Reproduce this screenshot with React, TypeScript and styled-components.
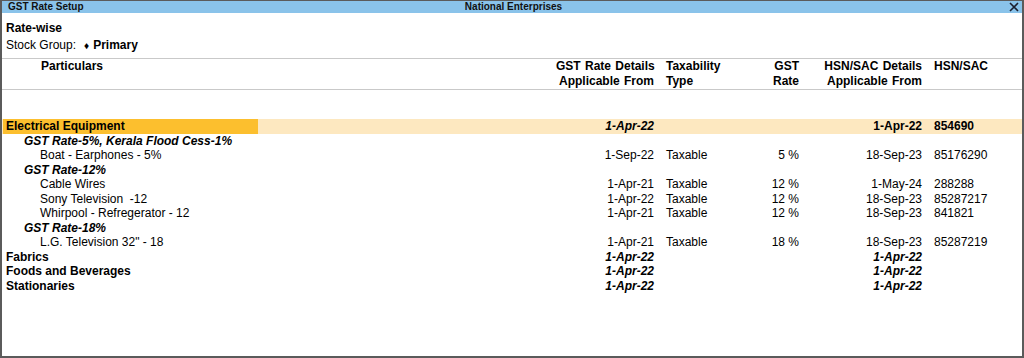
import React from 'react';
import styled, { createGlobalStyle, css } from 'styled-components';

const GlobalStyle = createGlobalStyle`
  html, body {
    margin: 0;
    padding: 0;
    background: #ffffff;
  }
  body {
    font-family: "Liberation Sans", Arial, sans-serif;
    color: #000;
  }
`;

type Level = 'group' | 'rate' | 'item';

interface ReportRow {
  name: string;
  level: Level;
  applicableFrom?: string;
  taxability?: string;
  gstRate?: string;
  hsnFrom?: string;
  hsn?: string;
  selected?: boolean;
}

const rows: ReportRow[] = [
  { name: 'Electrical Equipment', level: 'group', applicableFrom: '1-Apr-22', hsnFrom: '1-Apr-22', hsn: '854690', selected: true },
  { name: 'GST Rate-5%, Kerala Flood Cess-1%', level: 'rate' },
  { name: 'Boat - Earphones - 5%', level: 'item', applicableFrom: '1-Sep-22', taxability: 'Taxable', gstRate: '5 %', hsnFrom: '18-Sep-23', hsn: '85176290' },
  { name: 'GST Rate-12%', level: 'rate' },
  { name: 'Cable Wires', level: 'item', applicableFrom: '1-Apr-21', taxability: 'Taxable', gstRate: '12 %', hsnFrom: '1-May-24', hsn: '288288' },
  { name: 'Sony Television  -12', level: 'item', applicableFrom: '1-Apr-22', taxability: 'Taxable', gstRate: '12 %', hsnFrom: '18-Sep-23', hsn: '85287217' },
  { name: 'Whirpool - Refregerator - 12', level: 'item', applicableFrom: '1-Apr-21', taxability: 'Taxable', gstRate: '12 %', hsnFrom: '18-Sep-23', hsn: '841821' },
  { name: 'GST Rate-18%', level: 'rate' },
  { name: 'L.G. Television 32" - 18', level: 'item', applicableFrom: '1-Apr-21', taxability: 'Taxable', gstRate: '18 %', hsnFrom: '18-Sep-23', hsn: '85287219' },
  { name: 'Fabrics', level: 'group', applicableFrom: '1-Apr-22', hsnFrom: '1-Apr-22' },
  { name: 'Foods and Beverages', level: 'group', applicableFrom: '1-Apr-22', hsnFrom: '1-Apr-22' },
  { name: 'Stationaries', level: 'group', applicableFrom: '1-Apr-22', hsnFrom: '1-Apr-22' },
];

const columns = '1fr 110px 80px 65px 123px 91px';

const Window = styled.div`
  box-sizing: border-box;
  width: 1024px;
  height: 358px;
  border: 2px solid #5b5b5b;
  border-top-width: 1px;
  display: flex;
  flex-direction: column;
  background: #fff;
  overflow: hidden;
`;

const TitleBar = styled.div`
  height: 12px;
  background: #8ac3ea;
  display: grid;
  grid-template-columns: 1fr auto 1fr;
  align-items: center;
  padding: 0 3px 0 6px;
  font-size: 10px;
  font-weight: bold;
  line-height: 12px;
  color: #111;
`;

const TitleLeft = styled.span``;

const TitleCenter = styled.span`
  text-align: center;
`;

const CloseIcon = styled.svg`
  justify-self: end;
  width: 10px;
  height: 10px;
  display: block;
`;

const Info = styled.div`
  padding: 7px 0 4px 4px;
  font-size: 12px;
  line-height: 17px;
`;

const ReportName = styled.div`
  font-weight: bold;
`;

const StockGroup = styled.div`
  display: flex;
  gap: 6px;
  align-items: baseline;
`;

const Diamond = styled.span`
  font-size: 10px;
  margin-left: 2px;
  margin-right: -2px;
`;

const Strong = styled.span`
  font-weight: bold;
`;

const Divider = styled.hr`
  margin: 0;
  border: 0;
  border-top: 1px solid #c9c9c9;
`;

const Grid = styled.div`
  display: grid;
  grid-template-columns: ${columns};
  padding: 0 3px 0 1px;
`;

const HeaderRow = styled(Grid)`
  font-size: 12px;
  font-weight: bold;
  line-height: 15px;
  height: 30px;
`;

const HeaderCell = styled.div<{ $align?: 'left' | 'right' }>`
  padding: 0 6px;
  white-space: nowrap;
  word-spacing: 1px;
  text-align: ${p => p.$align ?? 'left'};
`;

const HeaderLine = styled.div``;

const ParticularsHead = styled(HeaderCell)`
  padding-left: 38px;
`;

const Body = styled.div`
  padding-top: 29px;
`;

const Row = styled(Grid)<{ $selected?: boolean; $level: Level }>`
  height: 14.5px;
  line-height: 14.5px;
  font-size: 12px;
  white-space: pre;
  ${p => p.$selected && css`background: #fde8c0;`}
  ${p => p.$level !== 'item' && css`font-weight: bold;`}
`;

const NameCell = styled.div<{ $level: Level; $selected?: boolean }>`
  padding-left: ${p => (p.$level === 'group' ? 3 : p.$level === 'rate' ? 21 : 37)}px;
  font-style: ${p => (p.$level === 'rate' ? 'italic' : 'normal')};
  ${p => p.$selected && css`
    width: 255px;
    box-sizing: border-box;
    background: #fcbf2e;
  `}
`;

const Cell = styled.div<{ $align?: 'left' | 'right'; $italic?: boolean }>`
  padding: 0 6px;
  text-align: ${p => p.$align ?? 'left'};
  font-style: ${p => (p.$italic ? 'italic' : 'normal')};
`;

const Head: React.FC<{ lines: string[]; align?: 'left' | 'right' }> = ({ lines, align }) => (
  <HeaderCell $align={align}>
    {lines.map(l => (
      <HeaderLine key={l}>{l}</HeaderLine>
    ))}
  </HeaderCell>
);

const App: React.FC = () => (
  <>
    <GlobalStyle />
    <Window>
      <TitleBar>
        <TitleLeft>GST Rate Setup</TitleLeft>
        <TitleCenter>National Enterprises</TitleCenter>
        <CloseIcon viewBox="0 0 10 10">
          <path d="M1 1 L9 9 M9 1 L1 9" stroke="#1c1f2e" strokeWidth="1.6" />
        </CloseIcon>
      </TitleBar>
      <Info>
        <ReportName>Rate-wise</ReportName>
        <StockGroup>
          <span>Stock Group:</span>
          <Diamond>♦</Diamond>
          <Strong>Primary</Strong>
        </StockGroup>
      </Info>
      <Divider />
      <HeaderRow>
        <ParticularsHead>Particulars</ParticularsHead>
        <Head align="right" lines={['GST Rate Details', 'Applicable From']} />
        <Head lines={['Taxability', 'Type']} />
        <Head align="right" lines={['GST', 'Rate']} />
        <Head align="right" lines={['HSN/SAC Details', 'Applicable From']} />
        <Head lines={['HSN/SAC']} />
      </HeaderRow>
      <Divider />
      <Body>
        {rows.map(r => {
          const italicDate = r.level === 'group' && !r.selected;
          return (
            <Row key={r.name} $level={r.level} $selected={r.selected}>
              <NameCell $level={r.level} $selected={r.selected}>{r.name}</NameCell>
              <Cell $align="right" $italic={r.level === 'group'}>{r.applicableFrom}</Cell>
              <Cell>{r.taxability}</Cell>
              <Cell $align="right">{r.gstRate}</Cell>
              <Cell $align="right" $italic={italicDate}>{r.hsnFrom}</Cell>
              <Cell>{r.hsn}</Cell>
            </Row>
          );
        })}
      </Body>
    </Window>
  </>
);

export default App;
